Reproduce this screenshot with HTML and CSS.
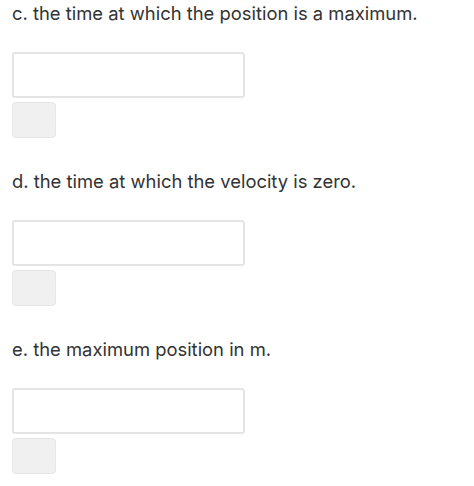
FILE: index.html
```html
<!DOCTYPE html>
<html>
<head>
<meta charset="utf-8">
<link rel="stylesheet" href="styles.css">
</head>
<body>
<div class="q">
  <p class="label">c. the time at which the position is a maximum.</p>
  <input class="answer" type="text">
  <button class="check" type="button"></button>
</div>
<div class="q">
  <p class="label">d. the time at which the velocity is zero.</p>
  <input class="answer" type="text">
  <button class="check" type="button"></button>
</div>
<div class="q">
  <p class="label">e. the maximum position in m.</p>
  <input class="answer" type="text">
  <button class="check" type="button"></button>
</div>
</body>
</html>
```
FILE: styles.css
```css
html, body {
  margin: 0;
  padding: 0;
  background: #fff;
}
body {
  padding: 0 12px;
  font-family: Inter, "Noto Sans", sans-serif;
  color: #333333;
}
.q {
  display: flex;
  flex-direction: column;
  align-items: flex-start;
  height: 168px;
}
.label {
  margin: 0;
  font-size: 18.4px;
  font-weight: 400;
  line-height: 27px;
  height: 52px;
}
.answer {
  box-sizing: border-box;
  width: 233px;
  height: 46px;
  margin: 0;
  border: 2px solid #e4e4e4;
  border-radius: 3px;
  background: #fff;
}
.check {
  box-sizing: border-box;
  width: 44px;
  height: 36px;
  margin: 4px 0 0;
  border: 1px solid #e6e6e6;
  border-radius: 4px;
  background: #f0f0f0;
}
```
